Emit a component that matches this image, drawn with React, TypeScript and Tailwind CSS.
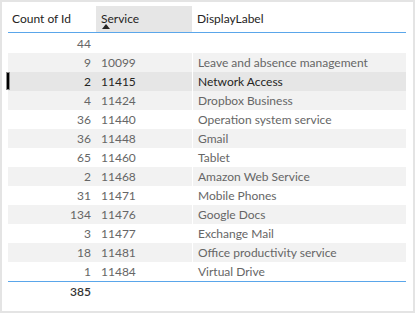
import React from "react";

type Row = { count: string; service: string; label: string };

const rows: Row[] = [
  { count: "44", service: "", label: "" },
  { count: "9", service: "10099", label: "Leave and absence management" },
  { count: "2", service: "11415", label: "Network Access" },
  { count: "4", service: "11424", label: "Dropbox Business" },
  { count: "36", service: "11440", label: "Operation system service" },
  { count: "36", service: "11448", label: "Gmail" },
  { count: "65", service: "11460", label: "Tablet" },
  { count: "2", service: "11468", label: "Amazon Web Service" },
  { count: "31", service: "11471", label: "Mobile Phones" },
  { count: "134", service: "11476", label: "Google Docs" },
  { count: "3", service: "11477", label: "Exchange Mail" },
  { count: "18", service: "11481", label: "Office productivity service" },
  { count: "1", service: "11484", label: "Virtual Drive" },
];

const SELECTED = 2;

export default function App() {
  return (
    <div
      className="w-[418px] h-[316px] bg-white text-[12px]"
      style={{ fontFamily: "Lato, 'Open Sans', sans-serif" }}
    >
      <div className="w-[415px] h-[313px] border-t-2 border-l-2 border-r-2 border-b-2 border-[#e4e4e4] pl-[6px] pr-[7px] pt-[4px]">
        {/* header */}
        <div className="flex h-[26px] items-stretch text-[#252423]">
          <div className="w-[88px] pl-[4px] flex items-center">Count of Id</div>
          <div className="w-[96px] bg-[#e6e6e6] pl-[5px] relative flex items-center">
            <span>Service</span>
            <svg
              className="absolute left-[6px] top-[18px]"
              width="8"
              height="5"
              viewBox="0 0 8 5"
            >
              <polygon points="0,5 4,0 8,5" fill="#252423" />
            </svg>
          </div>
          <div className="flex-1 pl-[5px] flex items-center">DisplayLabel</div>
        </div>
        <div className="h-px bg-[#5aa6ea]" />
        {/* body */}
        <div className="pt-[1px]">
          {rows.map((r, i) => {
            const sel = i === SELECTED;
            const bg = sel ? "bg-[#e6e6e6]" : i % 2 === 1 ? "bg-[#f2f2f2]" : "bg-white";
            const color = sel ? "text-[#252423]" : "text-[#666666]";
            return (
              <div key={i} className={`relative flex h-[19px] items-center ${bg} ${color}`}>
                {sel && (
                  <div className="absolute left-[-2px] top-0 h-[18px] w-[4px] bg-black border border-[#8a8a8a]" />
                )}
                <div className="w-[88px] pr-[5px] text-right">{r.count}</div>
                <div className="w-[96px] pl-[5px]">{r.service}</div>
                <div className="flex-1 pl-[5px] border-l border-white h-full flex items-center">
                  {r.label}
                </div>
              </div>
            );
          })}
        </div>
        <div className="h-px bg-[#5aa6ea]" />
        {/* total */}
        <div className="flex h-[20px] items-center text-[#333333] font-semibold">
          <div className="w-[88px] pr-[5px] text-right">385</div>
        </div>
      </div>
    </div>
  );
}
